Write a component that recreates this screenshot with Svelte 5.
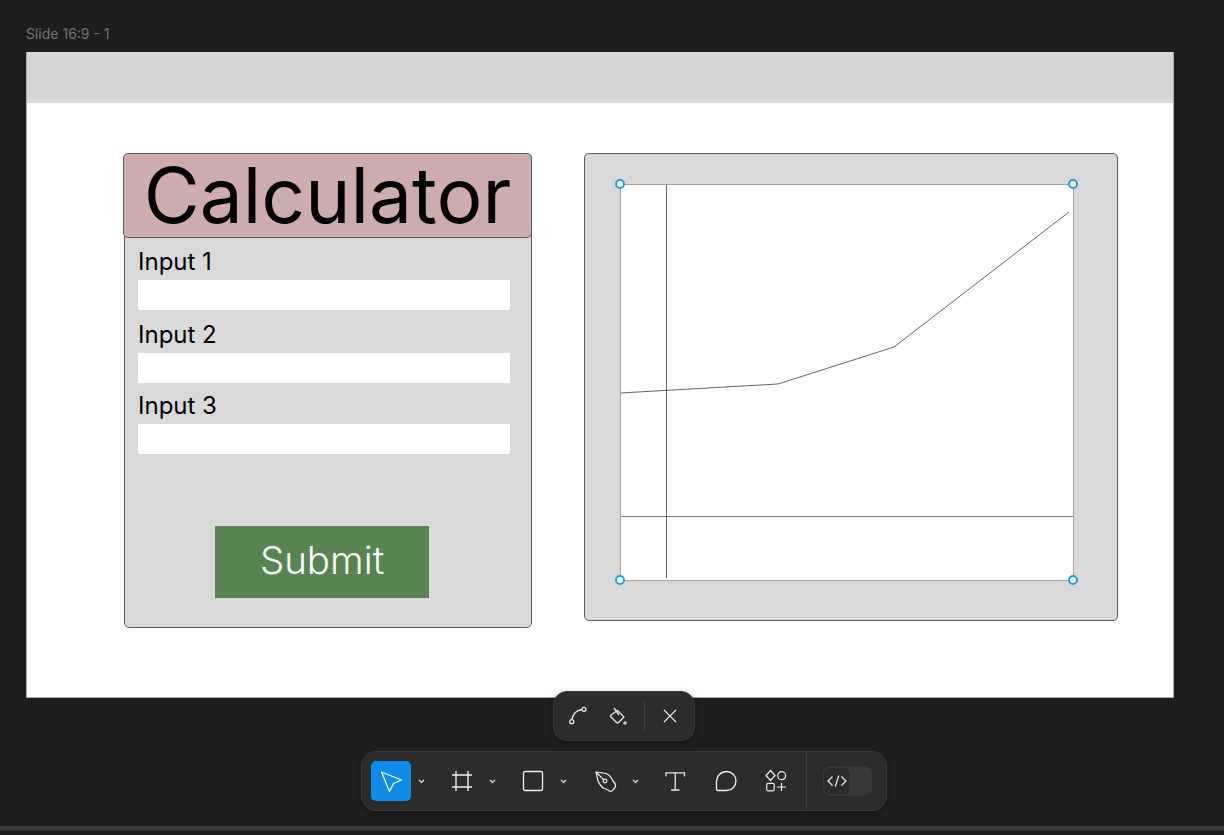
<script>
	const inputs = ['Input 1', 'Input 2', 'Input 3'];
	const handles = [
		{ x: 0, y: 0 },
		{ x: 453, y: 0 },
		{ x: 0, y: 396 },
		{ x: 453, y: 396 }
	];
</script>

{#snippet chevron()}
	<svg class="chev" width="20" height="40" viewBox="0 0 20 40" fill="none">
		<path d="M8 19l2.500 2.500 2.500-2.500" stroke="#e6e6e6" stroke-width="1.200" />
	</svg>
{/snippet}

<div class="editor">
	<div class="slide-name">Slide 16:9 - 1</div>
	<div class="slide">
		<div class="slide-header"></div>

		<!-- frames sit freely on the slide canvas -->
		<div class="calc">
			<h1>Calculator</h1>
			<div class="fields">
				{#each inputs as label}
					<div class="field">
						<div class="field-label">{label}</div>
						<div class="field-box"></div>
					</div>
				{/each}
			</div>
			<div class="submit">Submit</div>
		</div>

		<div class="chart-card">
			<div class="chart">
				<svg class="chart-lines" width="454" height="397" viewBox="0 0 454 397" fill="none">
					<path d="M46.500 0V394" stroke="#444" stroke-width="0.800" />
					<path d="M0 332.500H453" stroke="#555" stroke-width="0.800" />
					<path d="M0 209L158 200L274 163L449 28" stroke="#222" stroke-width="0.700" />
				</svg>
				{#each handles as h}
					<span class="handle" style="left:{h.x}px;top:{h.y}px"></span>
				{/each}
			</div>
		</div>
	</div>

	<div class="subbar">
		<svg class="sub-icon" width="24" height="24" viewBox="0 0 24 24" fill="none" stroke="#e6e6e6" stroke-width="1.300">
			<circle cx="5.700" cy="17.700" r="2" />
			<circle cx="18" cy="5.300" r="2" />
			<path d="M6 15.500C6.500 10.500 10.500 6 16 5.500" />
		</svg>
		<svg class="sub-icon bucket" width="24" height="24" viewBox="0 0 24 24" fill="none" stroke="#e6e6e6" stroke-width="1.300">
			<path d="M10.500 6.500L17 13L11.500 18.500Q10.500 19.500 9.500 18.500L4 13Q3 12 4 11Z" />
			<path d="M7 4L12 11" />
			<circle cx="18" cy="19" r="1.800" fill="#d0d0d0" stroke="none" />
		</svg>
		<div class="sub-divider"></div>
		<svg class="sub-icon close" width="24" height="24" viewBox="0 0 24 24" fill="none" stroke="#e6e6e6" stroke-width="1.200">
			<path d="M6 6L18 18M18 6L6 18" />
		</svg>
	</div>

	<div class="toolbar">
		<div class="tools">
			<div class="tool-group">
				<div class="tool active">
					<svg width="24" height="24" viewBox="0 0 24 24" fill="none" stroke="#fff" stroke-width="1.300" stroke-linejoin="round">
						<path d="M2.500 3L22.500 11L14.500 14.500L10.500 22.500Z" />
					</svg>
				</div>
				{@render chevron()}
			</div>
			<div class="tool-group">
				<div class="tool">
					<svg width="24" height="24" viewBox="0 0 24 24" fill="none" stroke="#f0f0f0" stroke-width="1.400">
						<path d="M6 2V22M18 2V22M2 6H22M2 18H22" />
					</svg>
				</div>
				{@render chevron()}
			</div>
			<div class="tool-group wide">
				<div class="tool">
					<svg width="24" height="24" viewBox="0 0 24 24" fill="none" stroke="#f0f0f0" stroke-width="1.300">
						<rect x="2.500" y="2.500" width="19" height="19" rx="1.500" />
					</svg>
				</div>
				{@render chevron()}
			</div>
			<div class="tool-group flush">
				<div class="tool">
					<svg width="24" height="24" viewBox="0 0 24 24" fill="none" stroke="#f0f0f0" stroke-width="1.200" stroke-linejoin="round">
						<path d="M3 3L13 4.500Q18 7 20 12Q23 15 22.500 17.500Q22 19 20 21Q18.500 23 16.500 22Q13 19.500 10 19Q6 15 5 12Z" />
						<path d="M3 3L10.800 10.800" />
						<circle cx="12" cy="12" r="1.800" />
					</svg>
				</div>
				{@render chevron()}
			</div>
			<div class="tool">
				<svg width="24" height="24" viewBox="0 0 24 24" fill="none" stroke="#e6e6e6" stroke-width="1.300">
					<path d="M3 7.500V3.800H21.500V7.500M12.200 3.800V21M8 21H16.500" />
				</svg>
			</div>
			<div class="tool comment">
				<svg width="24" height="24" viewBox="0 0 24 24" fill="none" stroke="#f0f0f0" stroke-width="1.300">
					<path d="M12.500 2.500A9.500 9.500 0 1 1 12.500 21.500H4Q2.500 21.500 2.500 20V12.500A10 10 0 0 1 12.500 2.500Z" />
				</svg>
			</div>
			<div class="tool">
				<svg width="24" height="24" viewBox="0 0 24 24" fill="none" stroke="#f0f0f0" stroke-width="1.200">
					<path d="M6.500 1.500L11 6.500L6.500 11.500L2 6.500Z" />
					<circle cx="17.700" cy="6.700" r="4" />
					<rect x="2.700" y="14.300" width="7.500" height="7.500" rx="1.500" />
					<path d="M17.500 14V22M13 18H22" />
				</svg>
			</div>
		</div>
		<div class="dev-section">
			<div class="toggle">
				<div class="thumb">
					<svg width="20" height="14" viewBox="0 0 20 14" fill="none" stroke="#f0f0f0" stroke-width="1.200">
						<path d="M5.500 2.500L1 7L5.500 11.500M14.500 2.500L19 7L14.500 11.500M11.800 1.500L8.200 12.500" />
					</svg>
				</div>
			</div>
		</div>
	</div>

	<div class="bottom-strip"></div>
</div>

<style>
	:global(body) {
		margin: 0;
		background: #1e1e1e;
	}

	.editor {
		position: relative;
		width: 1224px;
		height: 835px;
		overflow: hidden;
		background: #1e1e1e;
		font-family: Inter, 'Liberation Sans', sans-serif;
		padding: 26px 0 0 26px;
		box-sizing: border-box;
	}

	.slide-name {
		height: 26px;
		font-size: 14px;
		line-height: 16px;
		color: #737373;
	}

	.slide {
		position: relative;
		width: 1148px;
		height: 646px;
		box-sizing: border-box;
		background: #fff;
		border: 1px solid #a8a8a8;
		border-top: none;
	}

	.slide-header {
		height: 51px;
		background: #d6d6d6;
	}

	.calc {
		position: absolute;
		left: 97px;
		top: 101px;
		width: 408px;
		height: 475px;
		box-sizing: border-box;
		background: #d9d9d9;
		border: 1px solid #5c5c5c;
		border-radius: 5px;
		display: flex;
		flex-direction: column;
	}

	h1 {
		margin: -1px -1px 0 -2px;
		height: 85px;
		box-sizing: border-box;
		background: #ccacac;
		border: 1px solid #5c5c5c;
		border-radius: 5px;
		font-size: 76.700px;
		font-weight: 400;
		line-height: 82px;
		color: #000;
		text-align: center;
		white-space: nowrap;
	}

	.fields {
		display: flex;
		flex-direction: column;
		gap: 9px;
		padding: 8px 21px 0 13px;
	}

	.field:nth-child(3) {
		margin-top: -2px;
	}

	.field-label {
		font-size: 24px;
		line-height: 32px;
		margin-bottom: 2px;
		color: #000;
	}

	.field-box {
		height: 30px;
		background: #fff;
	}

	.submit {
		align-self: flex-start;
		margin: 72px 0 0 90px;
		width: 214px;
		height: 72px;
		background: #578450;
		color: #fff;
		font-size: 38.500px;
		font-weight: 350;
		line-height: 68px;
		text-align: center;
	}

	.chart-card {
		position: absolute;
		left: 557px;
		top: 101px;
		width: 534px;
		height: 468px;
		box-sizing: border-box;
		background: #d9d9d9;
		border: 1px solid #5c5c5c;
		border-radius: 5px;
		padding: 30px 0 0 35px;
	}

	.chart {
		position: relative;
		width: 454px;
		height: 397px;
		background: #fff;
	}

	.chart::after {
		content: '';
		position: absolute;
		inset: 0;
		border: 1px solid #a3a3a3;
	}

	.chart-lines {
		display: block;
	}

	.handle {
		position: absolute;
		z-index: 1;
		width: 10px;
		height: 10px;
		margin: -5px 0 0 -5px;
		box-sizing: border-box;
		background: #fff;
		border: 2px solid #1a9cf5;
		border-radius: 50%;
	}

	.subbar {
		position: absolute;
		left: 553px;
		top: 691px;
		width: 142px;
		height: 50px;
		box-sizing: border-box;
		background: #2c2c2c;
		border: 1px solid #383838;
		border-radius: 14px;
		box-shadow: 0 2px 6px rgba(0, 0, 0, 0.3);
		display: flex;
		align-items: center;
		padding-left: 12px;
	}

	.sub-icon {
		flex: none;
	}

	.bucket {
		margin-left: 17px;
	}

	.sub-divider {
		width: 1px;
		height: 30px;
		background: #444;
		margin-left: 13px;
	}

	.close {
		margin-left: 13px;
	}

	.toolbar {
		position: absolute;
		left: 361px;
		top: 751px;
		width: 526px;
		height: 60px;
		box-sizing: border-box;
		background: #2c2c2c;
		border: 1px solid #3a3a3a;
		border-radius: 15px;
		box-shadow: 0 2px 6px rgba(0, 0, 0, 0.3);
		display: flex;
		align-items: center;
	}

	.tools {
		display: flex;
		align-items: center;
		gap: 10px;
		padding-left: 9px;
		width: 444px;
		box-sizing: border-box;
		flex: none;
	}

	.tool-group {
		display: flex;
		align-items: center;
		margin-right: 1px;
	}

	.tool-group.wide {
		margin-right: 2px;
	}

	.tool-group.flush {
		margin-right: 0;
	}

	.tool {
		width: 40px;
		height: 40px;
		border-radius: 5px;
		display: flex;
		align-items: center;
		justify-content: center;
		flex: none;
	}

	.tool.active {
		background: #0d8ce9;
	}

	.tool.comment {
		margin-left: 1px;
	}

	.chev {
		display: block;
		flex: none;
	}

	.dev-section {
		flex: 1;
		height: 100%;
		border-left: 1px solid #3e3e3e;
		padding-left: 16px;
		display: flex;
		align-items: center;
	}

	.toggle {
		width: 49px;
		height: 30px;
		border-radius: 7px;
		background: #383838;
	}

	.thumb {
		width: 28px;
		height: 28px;
		margin-top: 1px;
		box-sizing: border-box;
		border: 1px solid #3a3a3a;
		border-radius: 7px;
		background: #2c2c2c;
		display: flex;
		align-items: center;
		justify-content: center;
	}

	.bottom-strip {
		position: absolute;
		left: 0;
		right: 0;
		top: 826px;
		height: 5px;
		background: #3a3a3a;
	}
</style>
